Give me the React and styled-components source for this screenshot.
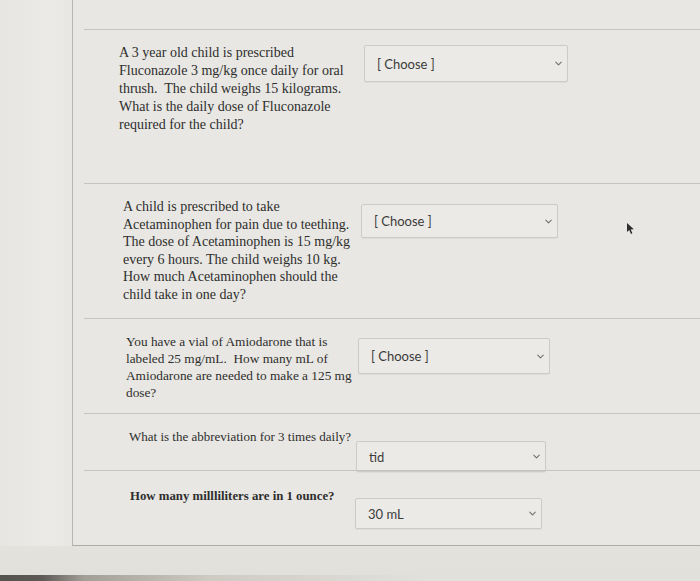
import React from 'react';
import styled, { createGlobalStyle } from 'styled-components';
import { ChevronDown } from 'lucide-react';

const GlobalStyle = createGlobalStyle`
  html, body {
    margin: 0;
    padding: 0;
    background: #e4e3df;
  }
  * {
    box-sizing: border-box;
  }
`;

// quiz rows, top to bottom
const questions = [
  {
    lines: [
      'A 3 year old child is prescribed',
      'Fluconazole 3 mg/kg once daily for oral',
      'thrush.\u00a0 The child weighs 15 kilograms.',
      'What is the daily dose of Fluconazole',
      'required for the child?'
    ],
    answer: '[ Choose ]',
    size: 14,
    height: 154,
    indent: 35,
    pad: 14,
    leading: 18,
    selLeft: 280,
    selTop: 15,
    selWidth: 204,
    selHeight: 37
  },
  {
    lines: [
      'A child is prescribed to take',
      'Acetaminophen for pain due to teething.',
      'The dose of Acetaminophen is 15 mg/kg',
      'every 6 hours. The child weighs 10 kg.',
      'How much Acetaminophen should the',
      'child take in one day?'
    ],
    answer: '[ Choose ]',
    size: 14,
    height: 135,
    indent: 39,
    pad: 14,
    leading: 17.6,
    selLeft: 277,
    selTop: 20,
    selWidth: 197,
    selHeight: 34
  },
  {
    lines: [
      'You have a vial of Amiodarone that is',
      'labeled 25 mg/mL.\u00a0 How many mL of',
      'Amiodarone are needed to make a 125 mg',
      'dose?'
    ],
    answer: '[ Choose ]',
    size: 13.3,
    height: 95,
    indent: 42,
    pad: 14,
    leading: 17,
    selLeft: 274,
    selTop: 19,
    selWidth: 192,
    selHeight: 36
  },
  {
    lines: ['What is the abbreviation for 3 times daily?'],
    answer: 'tid',
    size: 13,
    height: 57,
    indent: 45,
    pad: 14,
    leading: 18,
    selLeft: 272,
    selTop: 27,
    selWidth: 190,
    selHeight: 31
  },
  {
    lines: ['How many millliliters are in 1 ounce?'],
    answer: '30 mL',
    bold: true,
    size: 12.8,
    height: 75,
    indent: 46,
    pad: 16,
    leading: 18,
    selLeft: 271,
    selTop: 27,
    selWidth: 187,
    selHeight: 31
  }
];

const Screen = styled.div`
  position: relative;
  width: 700px;
  height: 581px;
  display: flex;
  flex-direction: column;
  overflow: hidden;
  background: #e4e3df;
`;

const Main = styled.div`
  display: flex;
  height: 546px;
`;

const Gutter = styled.div`
  width: 72px;
  flex-shrink: 0;
  background: linear-gradient(90deg, #e7e6e3 0%, #ebeae7 70%, #e8e7e4 100%);
`;

const Panel = styled.div`
  flex: 1;
  display: flex;
  flex-direction: column;
  padding: 29px 0 0 11px;
  background: #e8e7e3;
  border-left: 1px solid #b7b5b1;
  border-bottom: 1px solid #aeaca8;
`;

const Row = styled.div`
  display: flex;
  align-items: flex-start;
  height: ${(p) => p.$height}px;
  padding-left: ${(p) => p.$indent}px;
  border-top: 1px solid #c6c4c0;
`;

const Prompt = styled.div`
  width: ${(p) => p.$width}px;
  flex-shrink: 0;
  padding-top: ${(p) => p.$pad}px;
  font-family: 'Liberation Serif', 'Times New Roman', serif;
  font-size: ${(p) => p.$size}px;
  line-height: ${(p) => p.$leading}px;
  font-weight: ${(p) => (p.$bold ? 700 : 400)};
  color: #2e2e2d;
  white-space: nowrap;
`;

const Select = styled.div`
  display: flex;
  align-items: center;
  justify-content: space-between;
  margin-top: ${(p) => p.$top}px;
  width: ${(p) => p.$width}px;
  height: ${(p) => p.$height}px;
  padding: 0 3px 0 12px;
  background: #ebeae7;
  border: 1px solid #cdcbc7;
  border-radius: 2px;
  box-shadow: 0 1px 1px rgba(0, 0, 0, 0.05);
  font-family: Lato, 'Liberation Sans', sans-serif;
  font-size: 13px;
  color: #3b3b3a;
`;

const Chevron = styled(ChevronDown)`
  color: #6f6e6b;
  flex-shrink: 0;
`;

const Below = styled.div`
  flex: 1;
  background: linear-gradient(180deg, #e3e2dd 0%, #e1e0db 100%);
`;

const Footer = styled.div`
  height: 6px;
  background: linear-gradient(90deg, #55534f 0%, #5d5a56 6%, #a39f97 12%, #cfcbc3 30%, #e1e0db 60%);
`;

const Cursor = styled.svg`
  position: absolute;
  left: 626px;
  top: 222px;
`;

export default function App() {
  return (
    <>
      <GlobalStyle />
      <Screen>
        <Main>
          <Gutter />
          <Panel>
            {questions.map((q, i) => (
              <Row key={i} $height={q.height} $indent={q.indent}>
                <Prompt
                  $width={q.selLeft - q.indent}
                  $pad={q.pad}
                  $leading={q.leading}
                  $size={q.size}
                  $bold={q.bold}
                >
                  {q.lines.map((line, j) => (
                    <div key={j}>{line}</div>
                  ))}
                </Prompt>
                <Select $top={q.selTop} $width={q.selWidth} $height={q.selHeight}>
                  <span>{q.answer}</span>
                  <Chevron size={11} strokeWidth={2.2} />
                </Select>
              </Row>
            ))}
          </Panel>
        </Main>
        <Below />
        <Footer />
        <Cursor width='9' height='13' viewBox='0 0 9 13'>
          <path d='M1 1 L1 10 L3.2 8 L5 12 L6.4 11.3 L4.7 7.5 L7.8 7.3 Z' fill='#2d2d2d' />
        </Cursor>
      </Screen>
    </>
  );
}
